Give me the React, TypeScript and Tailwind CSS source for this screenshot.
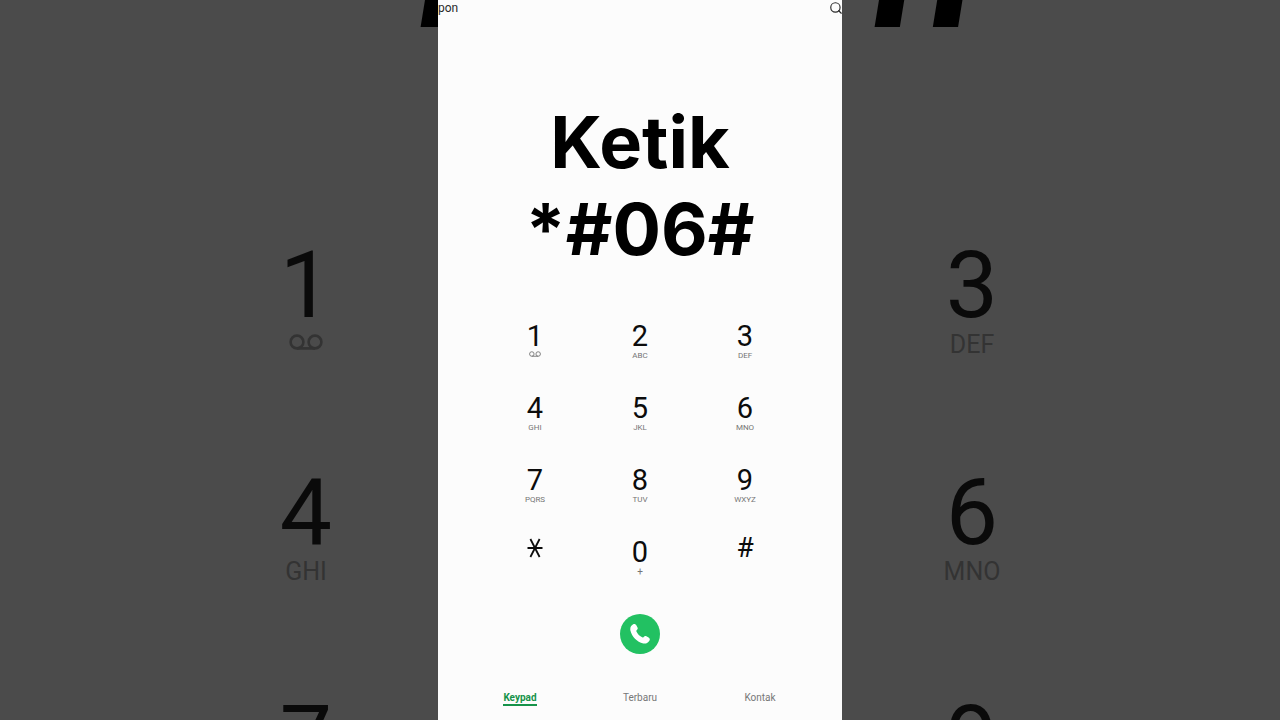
import { Search } from "lucide-react";
import clsx from "clsx";

type Key = { digit: string; letters?: string };

const keys: Key[] = [
  { digit: "1" },
  { digit: "2", letters: "ABC" },
  { digit: "3", letters: "DEF" },
  { digit: "4", letters: "GHI" },
  { digit: "5", letters: "JKL" },
  { digit: "6", letters: "MNO" },
  { digit: "7", letters: "PQRS" },
  { digit: "8", letters: "TUV" },
  { digit: "9", letters: "WXYZ" },
  { digit: "*" },
  { digit: "0", letters: "+" },
  { digit: "#" },
];

const tabs = ["Keypad", "Terbaru", "Kontak"];

function StarIcon() {
  return (
    <svg
      viewBox="0 0 16 20"
      className="mt-px h-5 w-4"
      fill="none"
      stroke="currentColor"
      strokeWidth="1.8"
    >
      <path d="M0.5 10h15M3.4 1l9.2 18M12.6 1L3.4 19" />
    </svg>
  );
}

function VoicemailIcon({ className }: { className: string }) {
  return (
    <svg
      viewBox="0 0 34 16"
      className={className}
      fill="none"
      stroke="currentColor"
      strokeWidth="2.6"
    >
      <circle cx="8" cy="8" r="6.4" />
      <circle cx="26" cy="8" r="6.4" />
      <path d="M8 14.4h18" />
    </svg>
  );
}

function KeyButton({ digit, letters }: Key) {
  return (
    <button
      type="button"
      aria-label={digit}
      className="flex h-[72px] flex-col items-center text-[#0c0c0c]"
    >
      {digit === "*" ? (
        <StarIcon />
      ) : (
        <span
          className={clsx(
            digit === "#"
              ? "text-[28px] leading-[22px]"
              : "text-[29px] leading-[30px]"
          )}
        >
          {digit}
        </span>
      )}
      {digit === "1" && (
        <VoicemailIcon className="h-[6px] w-3 text-[#7a7a7a]" />
      )}
      {letters && (
        <span
          className={clsx(
            "leading-[10px] text-[#757575]",
            letters === "+" ? "text-[10px]" : "text-[8px]"
          )}
        >
          {letters}
        </span>
      )}
    </button>
  );
}

// Enlarged, dimmed strip of the dialer shown on each side of the phone
function SideStrip({ side, items }: { side: "left" | "right"; items: Key[] }) {
  const left = side === "left";

  return (
    <div
      aria-hidden="true"
      className={clsx(
        "flex h-screen min-w-0 flex-1 flex-col overflow-hidden",
        left ? "items-end" : "items-start"
      )}
    >
      <div className="h-[242px] shrink-0">
        <div
          className={clsx(
            "-mt-[170px] font-['Inter',sans-serif] text-[228px] leading-none font-bold text-black",
            left ? "-mr-28" : "ml-3.5"
          )}
        >
          #
        </div>
      </div>
      {items.map((item) => (
        <div
          key={item.digit}
          className={clsx(
            "flex h-[227px] w-[100px] shrink-0 flex-col items-center",
            left ? "mr-[82px]" : "ml-20"
          )}
        >
          <span className="text-[93px] leading-[88px] text-[#0a0a0a]">
            {item.digit}
          </span>
          {item.letters ? (
            <span className="text-[25px] leading-[30px] text-[#333]">
              {item.letters}
            </span>
          ) : (
            <VoicemailIcon className="mt-1 h-4 w-[34px] text-[#333]" />
          )}
        </div>
      ))}
    </div>
  );
}

export default function App() {
  return (
    <div className="flex h-screen overflow-hidden bg-[#4b4b4b] font-['Roboto',sans-serif]">
      <SideStrip side="left" items={[keys[0], keys[3], keys[6]]} />

      <main className="flex w-[404px] shrink-0 flex-col bg-[#fcfcfc]">
        <header className="flex h-4 items-center justify-between text-[#2b2b2b]">
          <span className="text-xs">pon</span>
          <button type="button" aria-label="Search" className="-mr-px">
            <Search className="size-3.5" strokeWidth={2} />
          </button>
        </header>

        <h1 className="mt-[82px] text-center font-['Inter',sans-serif] text-[72px] leading-[87px] font-bold text-black">
          Ketik
          <br />
          *#06#
        </h1>

        <div className="mx-auto mt-[49px] grid w-[315px] grid-cols-3">
          {keys.map((item) => (
            <KeyButton key={item.digit} {...item} />
          ))}
        </div>

        <button
          type="button"
          aria-label="Call"
          className="mx-auto mt-[5px] flex size-10 shrink-0 items-center justify-center rounded-full bg-[#22c162] text-white"
        >
          <svg viewBox="0 0 20 20" className="size-5" fill="currentColor">
            <path d="M3.2.3C4.6-.3 5.9.4 6.6 1.8L7.5 3.5C8 4.6 7.7 5.3 6.8 6.1C6.2 6.7 6.2 7.3 6.7 8.1C7.8 10.3 9.500 12 11.7 13.1C12.5 13.6 13.1 13.5 13.7 12.9C14.5 12.1 15.3 11.8 16.4 12.3L18.2 13.2C19.6 13.9 20.2 15.2 19.5 16.5C18.3 18.9 15.9 20 13.3 19.5C6.9 17.9 1.9 12.900.4 6.5C-.1 3.900.8 1.5 3.2.3Z" />
          </svg>
        </button>

        <nav className="mx-auto mt-[38px] grid w-[360px] grid-cols-3 text-[10px] leading-3 text-[#777]">
          {tabs.map((tab, i) => (
            <a
              key={tab}
              href={`#${tab.toLowerCase()}`}
              className={clsx(
                "justify-self-center",
                i === 0 && "border-b-2 border-[#16934a] font-bold text-[#16934a]"
              )}
            >
              {tab}
            </a>
          ))}
        </nav>
      </main>

      <SideStrip side="right" items={[keys[2], keys[5], keys[8]]} />
    </div>
  );
}
